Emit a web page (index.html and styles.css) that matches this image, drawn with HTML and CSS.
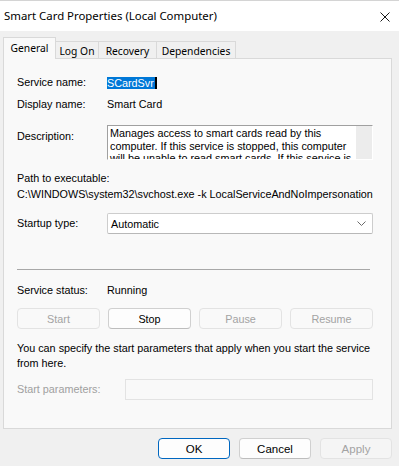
FILE: index.html
```html
<!DOCTYPE html>
<html>
<head>
<meta charset="utf-8">
<link rel="stylesheet" href="styles.css">
</head>
<body>
<div class="window">
  <div class="titlebar">
    <span class="title">Smart Card Properties (Local Computer)</span>
    <span class="close">
      <svg width="10" height="10" viewBox="0 0 10 10"><path d="M0.5 0.5 L9.5 9.5 M9.5 0.5 L0.5 9.5" stroke="#1a1a1a" stroke-width="1" fill="none"/></svg>
    </span>
  </div>
  <div class="content">
    <div class="tabs">
      <div class="tab tab-active">General</div>
      <div class="tab tab-logon">Log On</div>
      <div class="tab tab-recovery">Recovery</div>
      <div class="tab tab-deps">Dependencies</div>
    </div>
    <div class="panel">
      <div class="row row-name">
        <span class="label">Service name:</span>
        <span class="value"><span class="selected">SCardSvr</span><span class="caret"></span></span>
      </div>
      <div class="row row-display">
        <span class="label">Display name:</span>
        <span class="value">Smart Card</span>
      </div>
      <div class="row row-desc">
        <span class="label label-desc">Description:</span>
        <div class="textbox">
          <div class="textbox-text">Manages access to smart cards read by this computer. If this service is stopped, this computer will be unable to read smart cards. If this service is disabled, any services that explicitly depend on it will fail to start.</div>
          <div class="scrolltrack"></div>
        </div>
      </div>
      <div class="path-block">
        <div class="path-label">Path to executable:</div>
        <div class="path-value">C:\WINDOWS\system32\svchost.exe -k LocalServiceAndNoImpersonation</div>
      </div>
      <div class="row row-startup">
        <span class="label">Startup type:</span>
        <div class="combo">
          <span>Automatic</span>
          <svg class="chev" width="9" height="5" viewBox="0 0 9 5"><path d="M0.5 0.5 L4.5 4.5 L8.5 0.5" stroke="#6a6a6a" stroke-width="1" fill="none"/></svg>
        </div>
      </div>
      <div class="separator"></div>
      <div class="row row-status">
        <span class="label">Service status:</span>
        <span class="value">Running</span>
      </div>
      <div class="svc-buttons">
        <div class="btn btn-disabled">Start</div>
        <div class="btn">Stop</div>
        <div class="btn btn-disabled">Pause</div>
        <div class="btn btn-disabled">Resume</div>
      </div>
      <div class="hint">You can specify the start parameters that apply when you start the service from here.</div>
      <div class="row row-params">
        <span class="label label-disabled">Start parameters:</span>
        <div class="input-disabled"></div>
      </div>
    </div>
    <div class="footer">
      <div class="btn fbtn btn-default">OK</div>
      <div class="btn fbtn">Cancel</div>
      <div class="btn fbtn btn-disabled btn-apply">Apply</div>
    </div>
  </div>
</div>
</body>
</html>
```

FILE: styles.css
```css
* { box-sizing: border-box; }
html, body { margin: 0; padding: 0; }
body {
  width: 399px;
  height: 466px;
  overflow: hidden;
  background: #f0f0f0;
  font-family: "Liberation Sans", Arial, sans-serif;
  font-size: 10.8px;
  color: #000;
}
.window {
  width: 399px;
  height: 466px;
  border-top: 1px solid #d4d4d4;
  display: flex;
  flex-direction: column;
}
.titlebar {
  height: 30px;
  background: #fff;
  display: flex;
  align-items: center;
  justify-content: space-between;
  padding: 0 9px 0 4px;
}
.title {
  font-family: "Noto Sans", "Open Sans", sans-serif;
  font-size: 11.4px;
  color: #000;
  padding-bottom: 1px;
}
.close { display: flex; width: 10px; height: 10px; margin-top: 1px; }
.content {
  padding: 6px 7px 0 3px;
  flex: 1;
}
.tabs {
  display: flex;
  align-items: flex-end;
  height: 21px;
  font-family: "Noto Sans", "Open Sans", sans-serif;
  font-size: 10.3px;
}
.tab {
  height: 17px;
  background: #f0f0f0;
  border-top: 1px solid #d9d9d9;
  border-right: 1px solid #d9d9d9;
  display: flex;
  align-items: center;
  justify-content: center;
  padding-top: 1px;
}
.tab-active {
  position: relative;
  z-index: 1;
  height: 22px;
  margin-bottom: -1px;
  width: 53px;
  background: #f9f9f9;
  border-left: 1px solid #d9d9d9;
  padding-top: 0;
  padding-bottom: 2px;
}
.tab-logon { width: 43px; }
.tab-recovery { width: 58px; }
.tab-deps { width: 79px; }
.panel {
  width: 389px;
  height: 371px;
  border: 1px solid #d9d9d9;
  background: #f9f9f9;
  padding: 0 18px 0 13px;
}
.row {
  display: grid;
  grid-template-columns: 90px 1fr;
  align-items: center;
}
.label, .value { line-height: 13px; white-space: nowrap; }
.row-name { margin-top: 17px; height: 13px; }
.selected {
  background: #0078d7;
  color: #fff;
  display: inline-block;
  height: 12px;
  line-height: 12px;
  padding: 0 1px 0 0;
}
.caret {
  display: inline-block;
  width: 2px;
  height: 12px;
  background: #000;
  vertical-align: top;
}
.value { display: flex; align-items: center; }
.row-display { margin-top: 9px; height: 13px; }
.row-desc { margin-top: 14px; align-items: start; }
.label-desc { margin-top: 5px; }
.textbox {
  height: 35px;
  background: #fff;
  border-top: 1px solid #a0a0a0;
  border-left: 1px solid #a0a0a0;
  border-right: 1px solid #ffffff;
  border-bottom: 1px solid #ffffff;
  display: flex;
  overflow: hidden;
}
.textbox-text {
  flex: 1;
  padding: 1px 2px 0 2px;
  line-height: 12.5px;
  overflow: hidden;
}
.scrolltrack {
  width: 16px;
  background: #ececec;
}
.path-block { margin-top: 10px; }
.path-label, .path-value { line-height: 16px; white-space: nowrap; }
.row-startup { margin-top: 11px; }
.combo {
  height: 21px;
  background: #fff;
  border: 1px solid #cdcdcd;
  border-bottom-color: #b8b8b8;
  border-radius: 2px;
  display: flex;
  align-items: center;
  justify-content: space-between;
  padding: 0 6px 0 3px;
}
.chev { display: block; }
.separator {
  margin-top: 35px;
  height: 1px;
  width: 353px;
  background: #a8a8a8;
}
.row-status { margin-top: 14px; height: 13px; }
.svc-buttons {
  margin-top: 11px;
  display: grid;
  grid-template-columns: repeat(4, 1fr);
  column-gap: 8px;
}
.btn {
  height: 21px;
  border: 1px solid #d0d0d0;
  border-bottom-color: #bdbdbd;
  border-radius: 4px;
  background: #fdfdfd;
  display: flex;
  align-items: center;
  justify-content: center;
  color: #000;
}
.btn-disabled {
  border-color: #e3e3e3;
  background: #f9f9f9;
  color: #a3a3a3;
}
.hint {
  margin-top: 12px;
  line-height: 15px;
}
.row-params {
  margin-top: 8px;
  grid-template-columns: 108px 1fr;
}
.label-disabled { color: #a0a0a0; }
.input-disabled {
  height: 21px;
  border: 1px solid #e3e3e3;
  background: #f9f9f9;
}
.footer {
  margin-top: 9px;
  display: flex;
  justify-content: flex-end;
  gap: 9px;
}
.fbtn { width: 72px; font-size: 11.5px; }
.btn-default { border: 1px solid #0067c0; }
.btn-apply { background: #f5f5f5; }
```
